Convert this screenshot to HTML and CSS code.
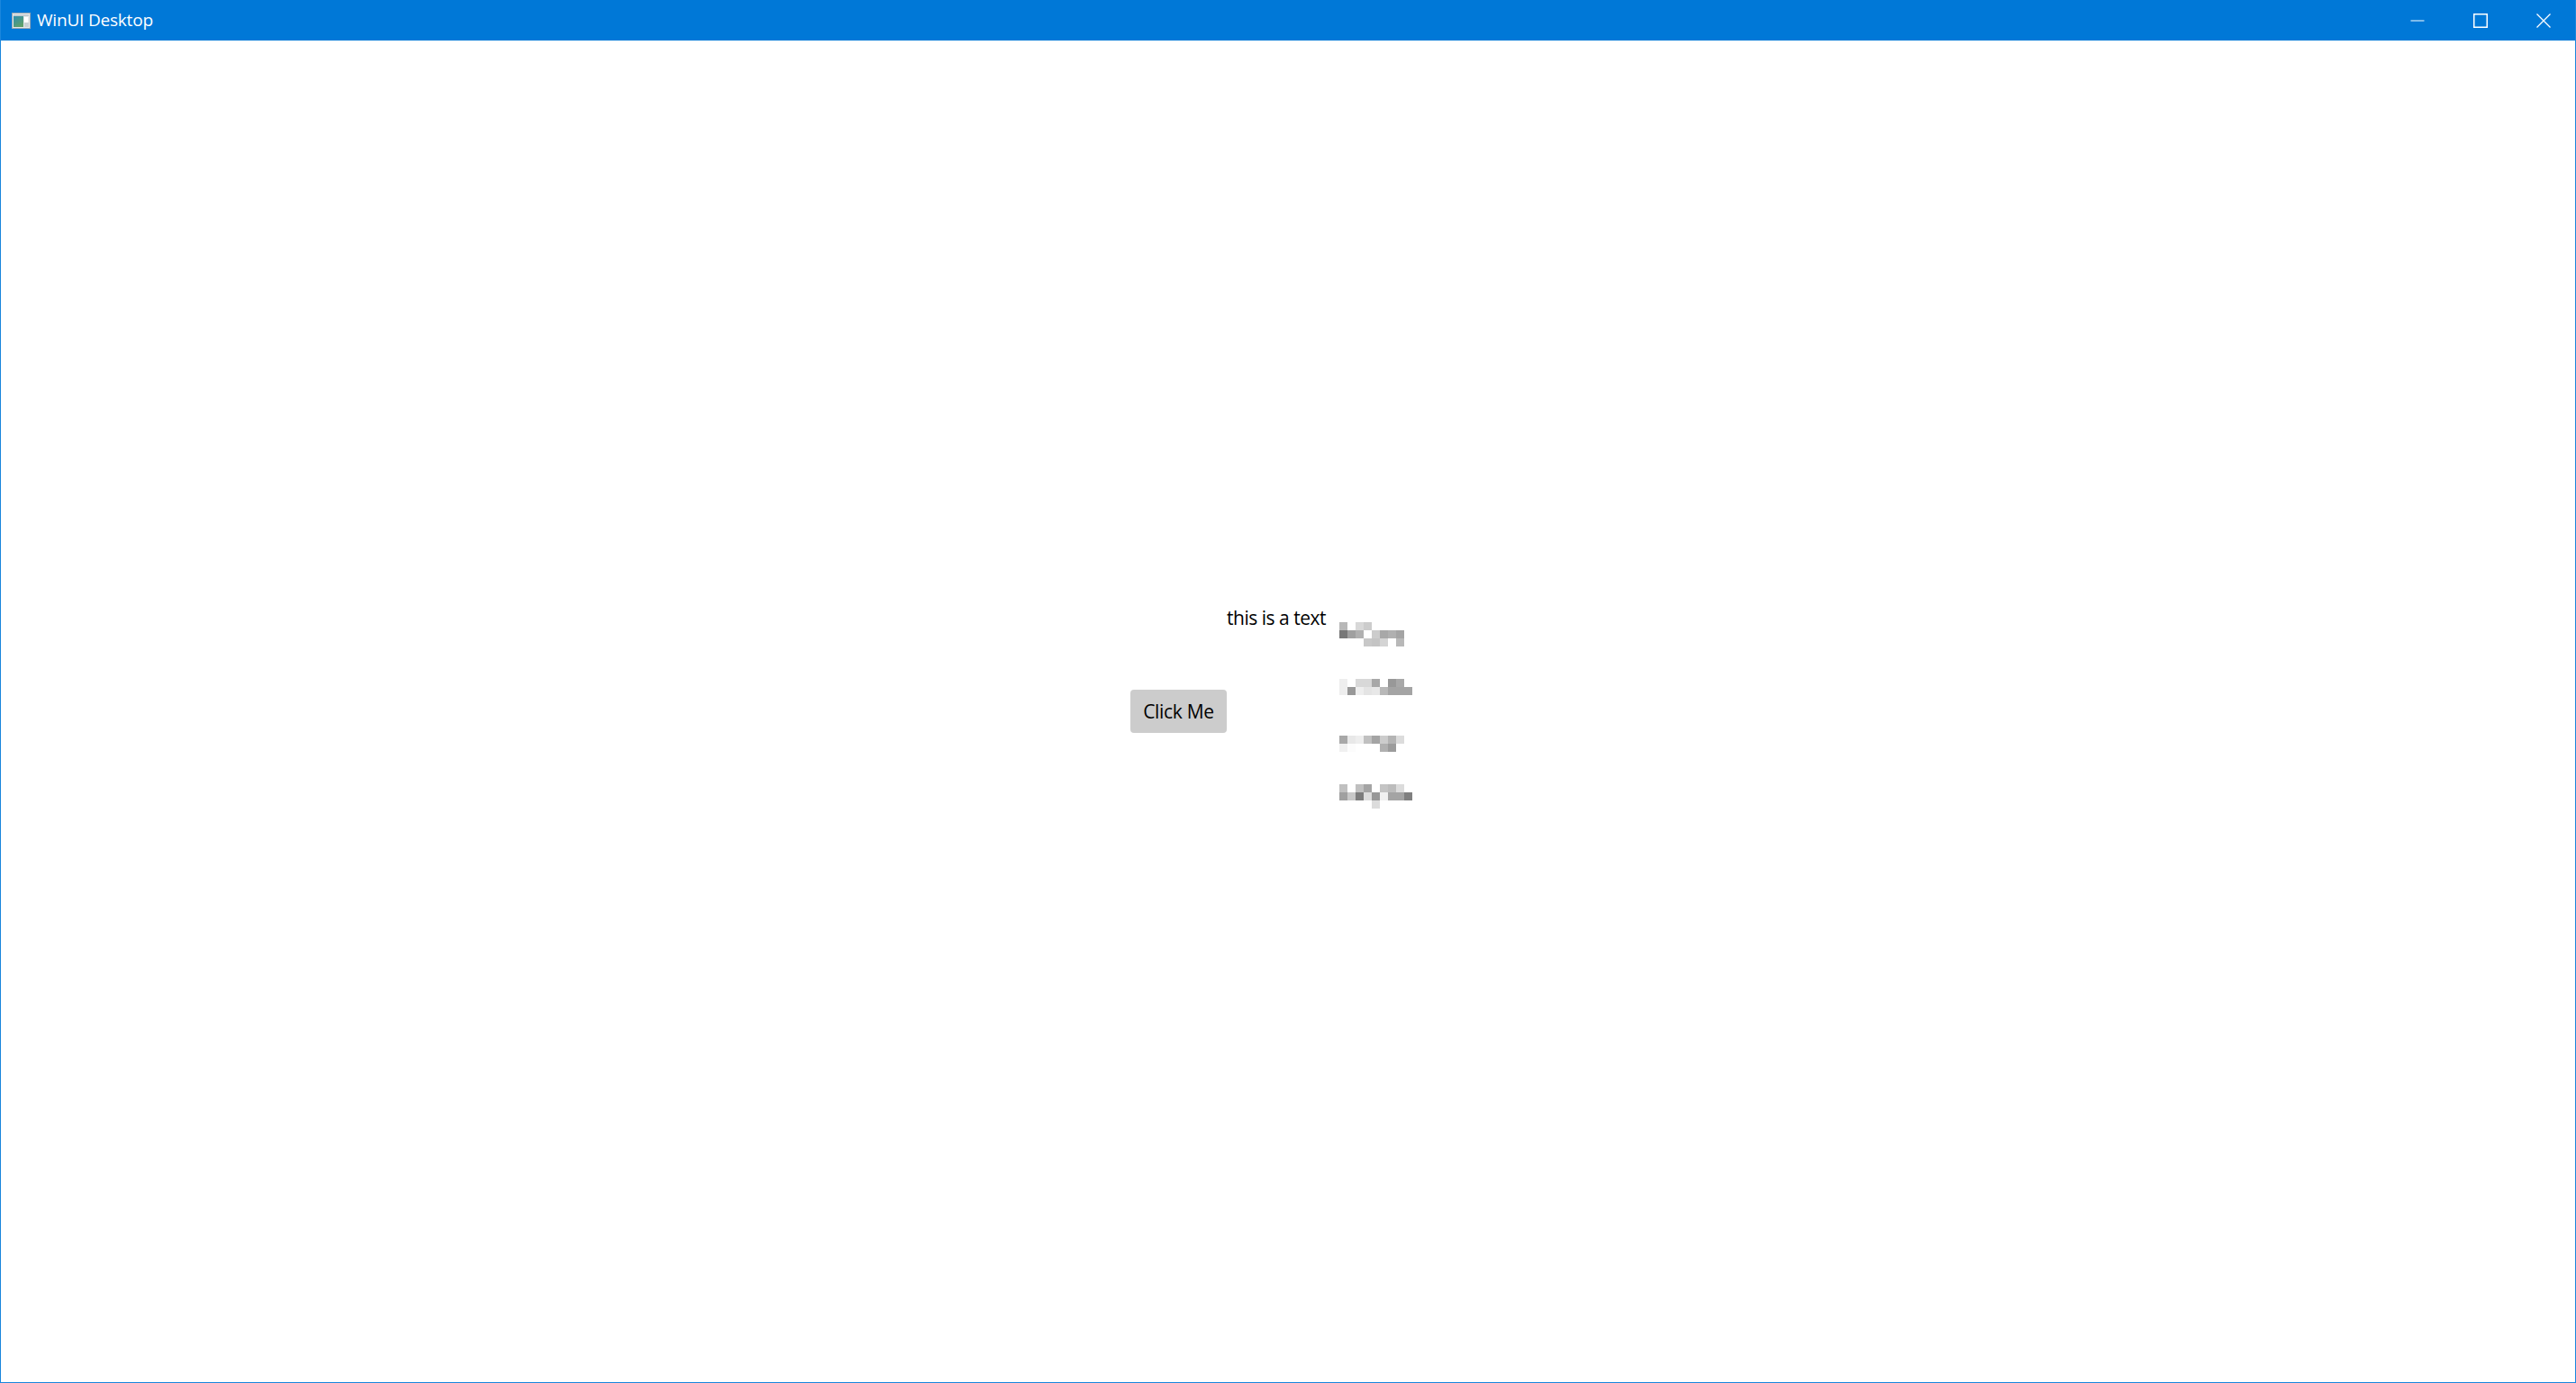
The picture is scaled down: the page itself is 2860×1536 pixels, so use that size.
FILE: index.html
```html
<!DOCTYPE html>
<html lang="en">
<head>
    <meta charset="UTF-8">
    <title>WinUI Desktop</title>
    <link rel="stylesheet" href="styles.css">
</head>
<body>
    <div class="window">
        <div class="titlebar">
            <svg class="app-icon" width="21" height="18" viewBox="0 0 21 18">
                <defs>
                    <linearGradient id="pane" x1="0" y1="0" x2="0.6" y2="1">
                        <stop offset="0" stop-color="#2f8fb0"/>
                        <stop offset="1" stop-color="#5fa06a"/>
                    </linearGradient>
                </defs>
                <rect x="0.5" y="0.5" width="20" height="17" fill="#e4e8ea" stroke="#9aa7b2"/>
                <rect x="2" y="4" width="11" height="12" fill="url(#pane)"/>
                <rect x="2" y="2" width="17" height="2" fill="#c4cdd2"/>
                <rect x="14" y="5" width="4" height="6" fill="#fff"/>
                <rect x="14" y="11" width="5" height="5" fill="#c8d0d4"/>
            </svg>
            <span class="title">WinUI Desktop</span>
            <div class="controls">
                <div class="control">
                    <svg width="16" height="16" viewBox="0 0 16 16"><path d="M0.5 8H15.5" stroke="#fff" stroke-width="1"/></svg>
                </div>
                <div class="control">
                    <svg width="16" height="16" viewBox="0 0 16 16"><rect x="0.75" y="0.75" width="14.5" height="14.5" fill="none" stroke="#fff" stroke-width="1.5"/></svg>
                </div>
                <div class="control">
                    <svg width="16" height="16" viewBox="0 0 16 16"><path d="M0.5 0.5L15.5 15.5M15.5 0.5L0.5 15.5" stroke="#fff" stroke-width="1.3"/></svg>
                </div>
            </div>
        </div>
        <div class="content">
            <div class="stack">
                <button class="click-button">Click Me</button>
                <div class="text-col">this is a text</div>
                <!-- pixelated entries, blurred in the original capture -->
                <svg class="mosaic" width="81" height="207" viewBox="0 0 9 23" shape-rendering="crispEdges">
                    <rect x="0" y="0" width="1" height="1" fill="#b8b8b8"/>
                    <rect x="2" y="0" width="1" height="1" fill="#d8d8d8"/>
                    <rect x="3" y="0" width="1" height="1" fill="#cccccc"/>
                    <rect x="0" y="1" width="1" height="1" fill="#787878"/>
                    <rect x="1" y="1" width="1" height="1" fill="#a0a0a0"/>
                    <rect x="2" y="1" width="1" height="1" fill="#b0b0b0"/>
                    <rect x="4" y="1" width="1" height="1" fill="#cccccc"/>
                    <rect x="5" y="1" width="1" height="1" fill="#a8a8a8"/>
                    <rect x="6" y="1" width="1" height="1" fill="#b0b0b0"/>
                    <rect x="7" y="1" width="1" height="1" fill="#a4a4a4"/>
                    <rect x="3" y="2" width="1" height="1" fill="#c8c8c8"/>
                    <rect x="4" y="2" width="1" height="1" fill="#c4c4c4"/>
                    <rect x="5" y="2" width="1" height="1" fill="#d4d4d4"/>
                    <rect x="7" y="2" width="1" height="1" fill="#b8b8b8"/>

                    <rect x="0" y="7" width="1" height="1" fill="#eeeeee"/>
                    <rect x="2" y="7" width="1" height="1" fill="#d8d8d8"/>
                    <rect x="3" y="7" width="1" height="1" fill="#d8d8d8"/>
                    <rect x="4" y="7" width="1" height="1" fill="#a8a8a8"/>
                    <rect x="6" y="7" width="1" height="1" fill="#989898"/>
                    <rect x="7" y="7" width="1" height="1" fill="#a8a8a8"/>
                    <rect x="0" y="8" width="1" height="1" fill="#eeeeee"/>
                    <rect x="1" y="8" width="1" height="1" fill="#989898"/>
                    <rect x="2" y="8" width="1" height="1" fill="#eeeeee"/>
                    <rect x="3" y="8" width="1" height="1" fill="#e4e4e4"/>
                    <rect x="4" y="8" width="1" height="1" fill="#e8e8e8"/>
                    <rect x="5" y="8" width="1" height="1" fill="#b8b8b8"/>
                    <rect x="6" y="8" width="1" height="1" fill="#a4a4a4"/>
                    <rect x="7" y="8" width="1" height="1" fill="#a4a4a4"/>
                    <rect x="8" y="8" width="1" height="1" fill="#a4a4a4"/>

                    <rect x="0" y="14" width="1" height="1" fill="#a8a8a8"/>
                    <rect x="1" y="14" width="1" height="1" fill="#e8e8e8"/>
                    <rect x="2" y="14" width="1" height="1" fill="#eeeeee"/>
                    <rect x="3" y="14" width="1" height="1" fill="#c0c0c0"/>
                    <rect x="4" y="14" width="1" height="1" fill="#a4a4a4"/>
                    <rect x="5" y="14" width="1" height="1" fill="#cccccc"/>
                    <rect x="6" y="14" width="1" height="1" fill="#b4b4b4"/>
                    <rect x="7" y="14" width="1" height="1" fill="#dcdcdc"/>
                    <rect x="0" y="15" width="1" height="1" fill="#f0f0f0"/>
                    <rect x="1" y="15" width="1" height="1" fill="#fcfcfc"/>
                    <rect x="5" y="15" width="1" height="1" fill="#b0b0b0"/>
                    <rect x="6" y="15" width="1" height="1" fill="#9c9c9c"/>

                    <rect x="0" y="20" width="1" height="1" fill="#c0c0c0"/>
                    <rect x="2" y="20" width="1" height="1" fill="#c0c0c0"/>
                    <rect x="3" y="20" width="1" height="1" fill="#a4a4a4"/>
                    <rect x="5" y="20" width="1" height="1" fill="#c4c4c4"/>
                    <rect x="6" y="20" width="1" height="1" fill="#bcbcbc"/>
                    <rect x="7" y="20" width="1" height="1" fill="#dcdcdc"/>
                    <rect x="0" y="21" width="1" height="1" fill="#a0a0a0"/>
                    <rect x="1" y="21" width="1" height="1" fill="#c8c8c8"/>
                    <rect x="2" y="21" width="1" height="1" fill="#7c7c7c"/>
                    <rect x="3" y="21" width="1" height="1" fill="#dcdcdc"/>
                    <rect x="4" y="21" width="1" height="1" fill="#989898"/>
                    <rect x="5" y="21" width="1" height="1" fill="#f0f0f0"/>
                    <rect x="6" y="21" width="1" height="1" fill="#a4a4a4"/>
                    <rect x="7" y="21" width="1" height="1" fill="#a4a4a4"/>
                    <rect x="8" y="21" width="1" height="1" fill="#808080"/>
                    <rect x="4" y="22" width="1" height="1" fill="#dcdcdc"/>
                </svg>
            </div>
        </div>
    </div>
</body>
</html>
```

FILE: styles.css
```css
html, body {
    margin: 0;
    padding: 0;
    height: 100%;
}

body {
    font-family: "Open Sans", "Noto Sans", sans-serif;
    background: #fff;
    color: #000;
    overflow: hidden;
}

.window {
    box-sizing: border-box;
    height: 100vh;
    display: flex;
    flex-direction: column;
    border: 1px solid #1a86dc;
    border-top: none;
}

.titlebar {
    height: 45px;
    flex-shrink: 0;
    display: flex;
    align-items: center;
    background: #0078d7;
    color: #fff;
    padding-left: 12px;
}

.app-icon {
    flex-shrink: 0;
}

.title {
    margin-left: 7px;
    font-size: 19px;
    letter-spacing: -0.2px;
    margin-top: -1px;
}

.controls {
    margin-left: auto;
    display: flex;
}

.control {
    width: 70px;
    height: 45px;
    display: flex;
    align-items: center;
    justify-content: center;
}

.content {
    flex: 1;
    display: flex;
    align-items: center;
    justify-content: center;
}

.stack {
    display: flex;
    align-items: center;
    height: 236px;
    margin-right: 37px;
}

.click-button {
    width: 107px;
    height: 48px;
    padding: 0;
    border: none;
    border-radius: 4px;
    background: #cccccc;
    color: #000;
    font-family: inherit;
    font-size: 21px;
    letter-spacing: -0.3px;
}

.text-col {
    align-self: flex-start;
    width: 125px;
    font-size: 21px;
    letter-spacing: -0.48px;
    line-height: 28px;
    white-space: nowrap;
}

.mosaic {
    align-self: flex-start;
    margin-top: 19px;
}
```
